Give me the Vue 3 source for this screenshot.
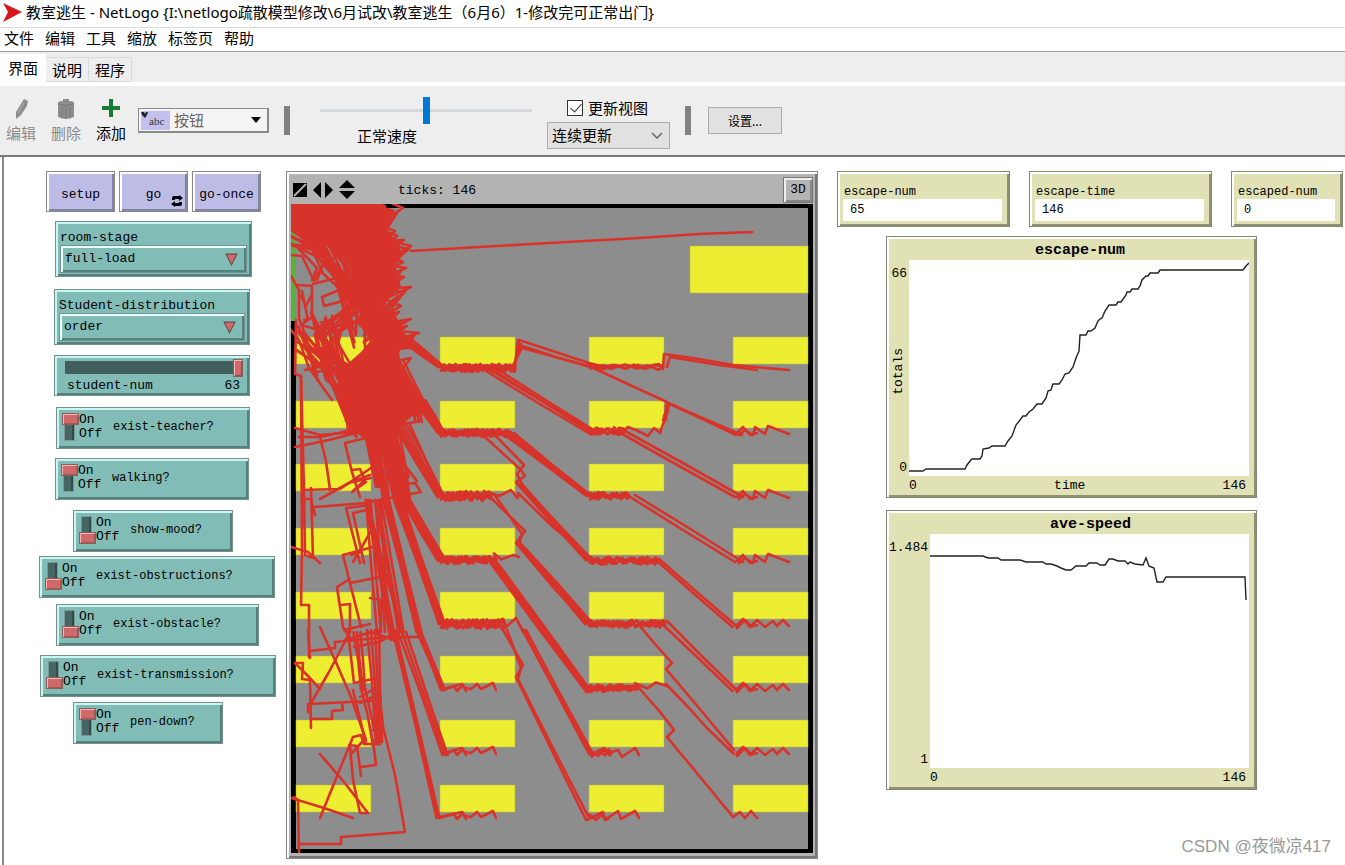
<script setup>
import { ref } from 'vue'

const menus = ['文件', '编辑', '工具', '缩放', '标签页', '帮助']
const tabs = ['界面', '说明', '程序']
const activeTab = ref('界面')

const choosers = [
  { id: 'room-stage', value: 'full-load', left: 16, gap: 9, width: 197 },
  { id: 'Student-distribution', value: 'order', left: 15, gap: 12, width: 196 },
]
const switches = ref([
  { id: 'exist-teacher?', on: true, left: 17, gap: 11, width: 194 },
  { id: 'walking?', on: true, left: 16, gap: 9, width: 194 },
  { id: 'show-mood?', on: false, left: 34, gap: 10, width: 160 },
  { id: 'exist-obstructions?', on: false, left: 0, gap: 4, width: 236 },
  { id: 'exist-obstacle?', on: false, left: 17, gap: 6, width: 203 },
  { id: 'exist-transmission?', on: false, left: 1, gap: 9, width: 236 },
  { id: 'pen-down?', on: true, left: 34, gap: 5, width: 150 },
])
const box = (w) => ({ marginLeft: w.left + 'px', marginTop: w.gap + 'px', width: w.width + 'px' })

const monitors = [
  { id: 'escape-num', value: '65' },
  { id: 'escape-time', value: '146' },
  { id: 'escaped-num', value: '0' },
]

const deskX = [297, 441, 590, 734]
const deskY = [337, 401, 464, 528, 592, 656, 720, 785]
const desks = deskY.flatMap((y) => deskX.map((x) => ({ x, y })))

let seed = 11
const rnd = () => {
  seed = (seed * 16807) % 2147483647
  return seed / 2147483647
}
const between = (a, b) => Math.round((a + rnd() * (b - a)) * 10) / 10

const trails = []
const add = (...pts) => trails.push(pts.map((p) => p.join(',')).join(' '))

// walking along a desk row
const zig = (x1, x2, y, amp, count, step = 6) => {
  for (let k = 0; k < count; k++) {
    const pts = []
    let up = k % 2 === 0
    for (let x = x1 + k; x < x2; x += between(step * 0.6, step * 1.3)) {
      pts.push([Math.round(x * 10) / 10, y + (up ? -amp : amp) * between(0.4, 1)])
      up = !up
    }
    pts.push([x2, y])
    add(...pts)
  }
}
// several walkers side by side between two places
const bundle = (x1, y1, x2, y2, n, spreadA, spreadB) => {
  for (let k = 0; k < n; k++) {
    const t = n === 1 ? 0 : k / (n - 1) - 0.5
    const mx = (x1 + x2) / 2 + t * (spreadA + spreadB) * 0.5 + between(-1, 1)
    add([x1 + t * spreadA, y1], [mx, (y1 + y2) / 2], [x2 + t * spreadB, y2])
  }
}

// second desk column
zig(441, 516, 368, 4, 6)
zig(441, 512, 433, 4, 6)
zig(441, 492, 496, 5, 5)
zig(488, 520, 494, 4, 1, 10)
zig(441, 497, 560, 4, 6)
zig(495, 520, 557, 4, 1, 10)
zig(441, 506, 624, 5, 5)
add([506, 628], [517, 618], [524, 632])
;[[444, 688], [446, 752], [440, 816]].forEach(([x, y]) => {
  add([x, y + 2], [455, y - 2], [458, y + 3], [464, y - 3], [467, y + 3])
  add([x, y + 1], [463, y - 4], [466, y], [472, y + 1], [478, y - 4], [482, y + 1], [494, y - 5], [497, y + 2])
})
// third desk column
zig(590, 664, 367, 3, 3, 12)
zig(590, 625, 431, 4, 4)
add([615, 427], [620, 435], [629, 427], [639, 431], [649, 436], [655, 428], [661, 433], [669, 410])
zig(590, 630, 496, 4, 4)
zig(590, 658, 561, 4, 4)
zig(590, 666, 624, 4, 4)
zig(590, 640, 688, 4, 4)
zig(636, 668, 686, 4, 1, 10)
zig(592, 612, 753, 4, 2)
add([592, 755], [605, 748], [610, 753], [619, 750], [623, 757], [636, 748], [640, 755])
add([588, 820], [604, 812], [606, 820], [619, 811], [622, 819], [636, 811], [640, 818])
zig(590, 610, 817, 3, 1)
// fourth desk column
;[434, 498, 562, 626, 690, 754].forEach((y, i) => {
  add([738, y - 1], [744, y - 7], [751, y + 1], [758, y - 1])
  if (i < 3) add([740, y + 1], [746, y - 4], [754, y + 1], [756, y - 7], [766, y], [769, y - 8], [790, y])
  else add([738, y + 2], [746, y - 6], [752, y], [758, y - 6], [766, y + 1], [774, y - 5], [778, y], [784, y - 6], [790, y])
})
add([734, 817], [741, 812], [746, 818], [752, 811], [758, 818])

// first row across the room
add([515, 372], [520, 340], [590, 363], [602, 366])
add([512, 369], [523, 348], [590, 366])
add([516, 366], [519, 340], [517, 358], [522, 344])
add([520, 345], [560, 358], [595, 368])
add([664, 369], [665, 354], [700, 359], [734, 365], [790, 370])
add([668, 367], [671, 357], [720, 365], [758, 370])
bundle(590, 366, 668, 402, 1, 0, 0)
bundle(669, 403, 740, 435, 2, 0, 6)
for (let k = 0; k < 4; k++) add([665 + k, 416 - k], [670 - k, 405], [664 + k, 420])

bundle(491, 371, 595, 434, 2, 8, 8)
bundle(497, 371, 598, 434, 2, 8, 6)
bundle(509, 433, 590, 496, 4, 12, 5)
add([485, 436], [522, 470], [526, 476], [517, 482], [554, 523], [590, 561])
add([494, 433], [525, 465], [518, 474], [523, 484], [560, 526], [594, 561])
bundle(520, 484, 590, 560, 4, 3, 6)
add([491, 497], [526, 531], [517, 543], [554, 587], [590, 625])
add([495, 494], [523, 534], [520, 545], [590, 621])
add([519, 493], [554, 527], [592, 558])
bundle(520, 544, 590, 624, 4, 4, 8)
bundle(495, 563, 590, 692, 4, 7, 5)
add([504, 630], [524, 665], [517, 677], [554, 753], [587, 820])
add([508, 630], [522, 668], [519, 679], [556, 752], [590, 818])
bundle(526, 630, 592, 754, 2, 2, 4)
add([517, 618], [545, 670], [593, 754])

bundle(622, 431, 740, 497, 2, 8, 8)
bundle(632, 495, 740, 562, 2, 8, 8)
bundle(658, 559, 736, 627, 2, 4, 5)
bundle(664, 621, 736, 691, 2, 8, 5)
add([640, 625], [656, 644], [673, 663], [667, 669], [700, 708], [735, 750])
add([667, 684], [690, 708], [707, 727], [735, 754])
add([640, 688], [662, 713], [675, 730], [668, 737], [702, 778], [734, 817])

// trunks that run from the crowd to each row
bundle(405, 338, 442, 367, 6, 12, 6)
bundle(420, 400, 443, 434, 6, 12, 6)
bundle(403, 425, 442, 497, 6, 16, 7)
bundle(393, 430, 407, 500, 6, 14, 8)
bundle(407, 500, 443, 561, 6, 8, 8)
bundle(384, 430, 399, 500, 5, 10, 8)
bundle(399, 500, 443, 624, 6, 8, 6)
bundle(378, 430, 387, 500, 4, 8, 6)
bundle(387, 500, 420, 632, 4, 6, 5)
bundle(420, 632, 444, 690, 3, 4, 4)
bundle(379, 500, 402, 632, 3, 6, 5)
bundle(403, 632, 446, 755, 3, 8, 5)
bundle(368, 500, 393, 632, 3, 3, 4)
bundle(395, 630, 439, 818, 3, 3, 3)
bundle(374, 500, 384, 632, 4, 14, 12)
add([376, 530], [388, 580], [404, 632])
add([378, 540], [384, 600], [392, 640])
add([412, 251], [480, 247], [550, 243], [640, 238], [700, 234], [753, 232])

// the crowd near the door
const spikes = [
  [378, 205], [386, 206], [404, 208], [396, 231], [398, 236], [405, 240], [412, 246], [410, 249], [404, 262],
  [407, 268], [405, 277], [412, 287], [404, 293], [402, 306], [400, 312], [412, 319], [408, 326], [420, 333], [414, 338],
]
spikes.forEach(([x, y]) => {
  add([370, y + between(12, 34)], [x, y], [372, y + between(-14, 8)])
  add([365, y + between(20, 60)], [x - 5, y + 3])
})
for (let k = 0; k < 20; k++) {
  const x = between(300, 340)
  add([x, between(220, 236)], [x + between(18, 28), between(252, 280)], [between(352, 374), between(300, 350)])
}
for (let k = 0; k < 14; k++) {
  add([292, between(222, 246)], [between(312, 330), between(238, 258)], [between(346, 362), between(275, 310)])
}
for (let k = 0; k < 26; k++) {
  add([between(300, 340), between(312, 350)], [between(326, 352), between(362, 382)], [between(346, 375), between(412, 440)])
}
for (let k = 0; k < 12; k++) {
  add([between(316, 340), between(322, 345)], [between(345, 362), between(302, 328)])
}
for (let k = 0; k < 9; k++) {
  add([between(297, 310), between(328, 352)], [between(318, 334), between(345, 372)])
}
for (let k = 0; k < 16; k++) {
  add([between(372, 402), between(340, 380)], [between(402, 418), between(388, 402)], [between(412, 428), between(405, 418)])
}
for (let k = 0; k < 9; k++) {
  add([between(372, 395), between(415, 430)], [between(392, 421), between(476, 490)])
}
bundle(398, 360, 440, 432, 4, 12, 4)
bundle(410, 385, 420, 422, 3, 10, 6)
add([318, 280], [325, 262], [335, 258]); add([314, 284], [341, 277], [344, 301], [325, 306], [323, 297], [350, 286])
add([292, 255], [303, 256], [315, 281], [330, 252]); add([299, 248], [318, 268], [313, 280])
add([292, 276], [300, 290], [300, 318], [306, 335], [318, 375])
add([299, 285], [313, 286], [313, 318], [305, 320]); add([302, 296], [307, 306], [312, 296])
add([303, 291], [309, 320], [302, 325], [320, 330]); add([292, 330], [300, 340], [310, 368], [333, 400])
add([299, 326], [319, 380]); add([297, 320], [296, 374], [302, 376], [305, 490])
add([306, 370], [336, 363]); add([326, 326], [340, 335], [330, 345])
add([309, 368], [318, 372], [345, 366]); add([402, 360], [412, 358], [400, 373])

// wanderers on the left side
add([305, 490], [306, 555], [314, 558], [312, 488]); add([302, 376], [303, 547], [302, 605], [310, 605], [310, 657])
add([296, 428], [321, 435], [357, 432]); add([300, 437], [321, 437], [367, 427])
add([296, 447], [330, 440], [361, 432], [421, 421]); add([321, 437], [327, 461], [331, 490])
add([304, 490], [341, 489], [372, 468]); add([321, 499], [350, 483], [371, 475]); add([304, 499], [312, 499], [316, 515])
add([367, 438], [346, 443], [353, 472], [361, 497]); add([353, 470], [361, 469], [366, 480], [353, 492], [367, 482])
add([316, 507], [367, 503], [395, 497], [422, 492], [416, 483], [400, 485])
add([372, 505], [347, 508], [361, 563]); add([354, 513], [365, 563]); add([354, 513], [372, 509])
add([354, 562], [375, 526]); add([292, 547], [309, 552], [321, 563]); add([354, 482], [372, 478])
add([374, 547], [344, 555], [351, 583], [391, 575], [388, 560]); add([352, 555], [362, 552])
add([349, 580], [338, 587], [344, 627], [352, 640]); add([342, 605], [351, 604], [351, 632])
add([351, 583], [362, 627]); add([371, 598], [382, 600], [382, 632]); add([345, 630], [371, 624])
add([311, 651], [336, 648], [336, 642], [390, 637], [424, 637]); add([309, 630], [311, 658])
add([321, 627], [336, 660], [352, 697], [367, 740]); add([351, 632], [330, 672], [312, 703])
add([296, 663], [308, 675], [321, 689]); add([296, 663], [304, 663], [303, 679], [311, 680], [312, 728])
add([309, 712], [309, 704], [372, 701]); add([312, 719], [333, 719], [333, 711], [344, 710], [343, 703])
add([349, 632], [355, 683], [379, 678]); add([354, 690], [367, 744]); add([346, 640], [372, 632], [395, 640])
bundle(358, 632, 364, 690, 3, 7, 4)
bundle(374, 630, 380, 742, 4, 12, 6)
bundle(364, 688, 376, 742, 2, 4, 5)
add([361, 697], [373, 690]); add([361, 703], [374, 697]); add([374, 730], [384, 727]); add([355, 647], [380, 642], [394, 634])
add([380, 690], [384, 727], [396, 775], [406, 832], [342, 837], [342, 844], [300, 844])
add([381, 744], [365, 744], [362, 735], [354, 737], [347, 754], [321, 818])
add([350, 745], [358, 746], [362, 776]); add([362, 767], [377, 765], [374, 740])
add([351, 745], [354, 780], [361, 813], [369, 813], [345, 782], [321, 754]); add([365, 740], [352, 754])
add([292, 798], [325, 808], [354, 818]); add([295, 797], [299, 800], [300, 852])

const escapeLine =
  '909,471 923,471 926,469 965,469 967,465 971,460 972,459 980,459 982,456 983,449 989,448 992,446 1005,446 1008,441 1012,436 1016,425 1020,420 1023,416 1026,416 1029,412 1033,409 1037,404 1042,404 1046,398 1048,391 1051,390 1053,384 1059,384 1062,380 1065,374 1069,373 1073,367 1076,358 1079,351 1080,335 1086,335 1088,331 1091,331 1095,328 1098,321 1100,319 1102,318 1105,311 1109,305 1116,305 1118,302 1121,302 1126,295 1127,292 1130,292 1132,289 1138,289 1140,286 1142,280 1146,276 1148,276 1150,273 1158,273 1160,270 1243,270 1246,266 1249,263'
const speedLine =
  '930,554 983,554 988,556 998,556 1001,558 1020,558 1026,560 1043,560 1046,562 1051,562 1057,564 1061,566 1066,568 1071,568 1076,564 1086,564 1089,561 1097,561 1100,563 1105,563 1109,557 1113,557 1118,559 1125,559 1128,562 1130,560 1135,562 1143,563 1146,556 1149,564 1154,566 1157,580 1163,580 1166,575 1245,575 1246,598'
</script>

<template>
  <div class="app">
    <header class="titlebar">
      <svg class="logo" viewBox="0 0 20 20" aria-hidden="true"><path d="M1 1 20 10 1 20 6 10Z" fill="#d8171c" /></svg>
      <span>教室逃生 - NetLogo {I:\netlogo疏散模型修改\6月试改\教室逃生（6月6）1-修改完可正常出门}</span>
    </header>

    <nav class="menubar">
      <button v-for="m in menus" :key="m" type="button">{{ m }}</button>
    </nav>

    <div class="tabs" role="tablist">
      <button
        v-for="t in tabs" :key="t" type="button" role="tab"
        :class="{ active: t === activeTab }" :aria-selected="t === activeTab" @click="activeTab = t"
      >{{ t }}</button>
    </div>

    <div class="toolbar">
      <div class="tools">
        <button type="button" class="tool" disabled>
          <svg viewBox="0 0 20 22"><path d="M13 1 17 3 16 8 10 17 5 21 5 14Z" fill="#8c8c8c" /><path d="M13 5 7 15" stroke="#b4b4b4" stroke-width="1" /></svg>
          <span>编辑</span>
        </button>
        <button type="button" class="tool" disabled>
          <svg viewBox="0 0 20 22"><path d="M2 5Q2 3 7 3V1H13V3Q18 3 18 5V19Q10 23 2 19Z" fill="#8c8c8c" /><path d="M2 6Q10 9 18 6M6 9V19M10 9V20M14 9V19" fill="none" stroke="#777" /></svg>
          <span>删除</span>
        </button>
        <button type="button" class="tool">
          <svg viewBox="0 0 20 22"><path d="M8 1H12V8H19V12H12V19H8V12H1V8H8Z" fill="#1b7a35" /></svg>
          <span>添加</span>
        </button>
      </div>
      <div class="widget-kind">
        <span class="abc"><svg viewBox="0 0 8 6"><path d="M0 0H3L4 2 5 0H7L6 3 4 6 1 3Z" fill="#223" /></svg>abc</span>
        <select aria-label="控件类型"><option>按钮</option></select>
        <svg class="caret" viewBox="0 0 10 6"><path d="M0 0H10L5 6Z" /></svg>
      </div>
      <i class="divider"></i>
      <div class="speed">
        <input id="speed" type="range" min="0" max="100" value="50" />
        <label for="speed">正常速度</label>
      </div>
      <div class="updates">
        <label class="check"><input type="checkbox" checked /><span>更新视图</span></label>
        <div class="mode">
          <select aria-label="更新方式"><option>连续更新</option></select>
          <svg viewBox="0 0 12 7"><path d="M1 1 6 6 11 1" fill="none" stroke="#666" stroke-width="1.5" /></svg>
        </div>
      </div>
      <i class="divider"></i>
      <button type="button" class="settings">设置...</button>
    </div>

    <main class="board">
      <section class="controls">
        <div class="run">
          <button type="button">setup</button>
          <button type="button">go
            <svg viewBox="0 0 12 12"><path d="M1 5V3Q1 1 3 1H8V0L12 3 8 6V4H4V5ZM11 7V9Q11 11 9 11H4V12L0 9 4 6V8H8V7Z" /></svg>
          </button>
          <button type="button">go-once</button>
        </div>

        <div v-for="c in choosers" :key="c.id" class="chooser" :style="box(c)">
          <label :for="c.id">{{ c.id }}</label>
          <div class="pick">
            <select :id="c.id"><option>{{ c.value }}</option></select>
            <svg viewBox="0 0 12 12"><path d="M1 1H11L6 11Z" fill="#d06a6a" stroke="#6e4a48" /></svg>
          </div>
        </div>

        <div class="slider">
          <input id="student-num" type="range" min="0" max="63" value="63" />
          <div><label for="student-num">student-num</label><output for="student-num">63</output></div>
        </div>

        <label v-for="s in switches" :key="s.id" class="switch" :style="box(s)">
          <input v-model="s.on" type="checkbox" />
          <span class="states"><span>On</span><span>Off</span></span>
          <span>{{ s.id }}</span>
        </label>
      </section>

      <section class="view">
        <div class="view-head">
          <svg viewBox="0 0 64 20" aria-hidden="true">
            <path d="M1 3H15V17H1Z" /><path d="M2 16 14 4" stroke="#b3b3b3" stroke-width="2" />
            <path d="M21 10 29 2V18ZM41 10 33 2V18ZM55 0 63 8H47ZM55 19 47 11H63Z" />
          </svg>
          <span>ticks: 146</span>
          <button type="button">3D</button>
        </div>
        <svg class="world" viewBox="292 204 522 649" role="img" aria-label="world">
          <rect x="292" y="204" width="522" height="649" />
          <rect x="297" y="208" width="512" height="641" fill="#8d8d8d" />
          <rect x="292" y="218" width="5" height="103" fill="#59b03c" />
          <g fill="#eded31" stroke="#b8b84a" stroke-width="0.5">
            <rect v-for="(d, i) in desks" :key="i" :x="d.x" :y="d.y" width="75" height="27" />
            <rect x="691" y="246" width="118" height="47" />
          </g>
          <path class="crowd" d="M292 204H376L396 210 388 230 402 247 396 264 402 287 382 305 396 314 406 334 424 348 400 350 402 370 414 392 420 410 400 428 388 440 382 460 384 488 376 488 366 440 350 426 336 390 344 368 362 352 372 340 361 326 360 290 350 264 326 238 292 226Z" />
          <polyline v-for="(t, i) in trails" :key="i" class="trail" :points="t" />
        </svg>
      </section>

      <section class="outputs">
        <dl class="monitors">
          <div v-for="m in monitors" :key="m.id" class="monitor"><dt>{{ m.id }}</dt><dd>{{ m.value }}</dd></div>
        </dl>

        <figure class="plot">
          <figcaption>escape-num</figcaption>
          <div class="y-axis"><span>66</span><span class="y-name">totals</span><span>0</span></div>
          <svg viewBox="909 260 340 216"><polyline :points="escapeLine" /></svg>
          <div class="x-axis"><span>0</span><span>time</span><span>146</span></div>
        </figure>

        <figure class="plot wide-axis">
          <figcaption>ave-speed</figcaption>
          <div class="y-axis"><span>1.484</span><span>1</span></div>
          <svg viewBox="930 532 319 234"><polyline :points="speedLine" /></svg>
          <div class="x-axis"><span>0</span><span>146</span></div>
        </figure>
      </section>
    </main>
    <div class="watermark">CSDN @夜微凉417</div>
  </div>
</template>

<style>
body { margin: 0; background: #fff; }
</style>

<style scoped>
* { box-sizing: border-box; }
.app {
  position: relative; min-height: 100vh; display: flex; flex-direction: column;
  font: 15px/20px "Noto Sans CJK SC", sans-serif; color: #000; background: #fff;
}
button, select, input { font: inherit; color: inherit; margin: 0; }
button { border: 0; padding: 0; background: none; }
select { appearance: none; border: 0; background: none; outline: 0; }

.titlebar { display: flex; align-items: center; gap: 4px; height: 28px; padding: 0 2px 4px; border-bottom: 1px solid #dcdcdc; font-family: "Noto Sans", "Noto Sans CJK SC", sans-serif; white-space: nowrap; }
.logo { width: 20px; height: 20px; }
.menubar { display: flex; align-items: flex-start; gap: 11px; height: 24px; padding: 0 4px; border-bottom: 1px solid #a0a0a0; }
.tabs { display: flex; align-items: flex-end; height: 30px; background: #eee; }
.tabs button { height: 25px; padding: 0 6px; border: 1px solid #d9d9d9; border-left: 0; }
.tabs .active { height: 28px; padding: 0 7px 0 8px; background: #fff; border-color: #fff; }

.toolbar { display: flex; align-items: center; height: 75px; padding: 0 6px; background: #eee; border-top: 4px solid #fff; border-bottom: 2px solid #77797c; }
.tools { display: flex; gap: 15px; }
.tool { display: flex; flex-direction: column; align-items: center; gap: 3px; height: 50px; padding-top: 2px; }
.tool svg { width: 20px; height: 22px; flex: none; }
.tool:disabled { color: #8a8a8a; }
.widget-kind { position: relative; display: flex; align-items: center; width: 131px; height: 25px; margin-left: 12px; padding: 2px; border: 1px solid #8a8a8a; border-right-width: 2px; border-bottom-width: 2px; background: #f4f4f4; color: #666; }
.abc { position: relative; flex: none; width: 29px; height: 19px; padding-left: 8px; background: #c3c0ee; font: 11px/20px "Liberation Serif", serif; color: #333; }
.abc svg { position: absolute; left: 0; top: 1px; width: 8px; height: 6px; }
.widget-kind select { flex: 1; padding: 0 4px; }
.caret { width: 10px; height: 6px; margin-right: 4px; }
.divider { width: 6px; height: 29px; margin: 0 15px; background: #808080; }
.speed { display: flex; flex-direction: column; width: 212px; margin-left: 15px; }
.speed label { margin-left: 37px; }
.speed input { appearance: none; width: 100%; height: 30px; background: linear-gradient(#d5d8d8, #d5d8d8) center / 100% 3px no-repeat; }
.speed input::-webkit-slider-thumb { appearance: none; width: 7px; height: 27px; background: #0078d7; }
.updates { display: flex; flex-direction: column; gap: 4px; margin-left: 15px; padding-top: 5px; }
.check { display: flex; align-items: center; gap: 5px; height: 20px; padding-left: 20px; }
.check input { appearance: none; position: relative; width: 16px; height: 16px; border: 1px solid #333; background: #fff; }
.check input:checked::after { content: ""; position: absolute; left: 5px; top: 0; width: 5px; height: 10px; border: solid #333; border-width: 0 1px 1px 0; transform: rotate(42deg); }
.mode { display: flex; align-items: center; width: 123px; height: 27px; padding: 0 6px 0 4px; border: 1px solid #adadad; background: #e1e1e1; }
.mode select { flex: 1; padding: 0; }
.mode svg { width: 12px; height: 7px; }
.settings { width: 74px; height: 27px; margin-left: 2px; border: 1px solid #adadad; background: #e1e1e1; font-size: 12px; }

.board {
  flex: 1; display: grid; align-items: start; margin-left: 2px; padding: 14px 2px 0 35px; border-left: 2px solid #888;
  grid-template-columns: 237fr 10px 532fr 19px 506fr;
  font: 13px/16px "Liberation Mono", "Noto Sans CJK SC", monospace;
}
.controls { grid-column: 1; }
.view { grid-column: 3; }
.outputs { grid-column: 5; }

.run { display: flex; gap: 4px; margin-left: 7px; }
.run button { position: relative; width: 69px; height: 41px; padding: 6px 0 0; background: #bcbce6; border: 1px solid #8a8a8a; box-shadow: inset 2px 2px #fff, inset -2px -2px #8282a2; }
.run svg { position: absolute; right: 4px; bottom: 4px; width: 12px; height: 12px; }

.chooser, .slider, .switch { background: #82bcb6; border: 1px solid #77908e; box-shadow: inset 2px 2px #c9f5f2, inset -2px -2px #55817d; }
.chooser { height: 56px; padding: 8px 4px 3px; }
.chooser label { display: block; height: 15px; }
.pick { display: flex; align-items: center; height: 28px; padding: 0 8px 0 4px; border: 1px solid #77908e; box-shadow: inset 2px 2px #e8ffff, inset -2px -2px #55817d; }
.pick select { flex: 1; padding: 0; }
.pick svg { width: 13px; height: 13px; }
.slider { width: 196px; height: 41px; margin: 10px 0 0 15px; padding: 2px 6px; }
.slider input { display: block; appearance: none; width: 100%; height: 19px; padding: 0 0 0 3px; background: linear-gradient(#415f5c, #415f5c) 4px center / 100% 13px no-repeat; }
.slider input::-webkit-slider-thumb { appearance: none; width: 10px; height: 18px; background: #d06a6a; border: 1px solid #85605f; box-shadow: inset 1px 1px #ffb0b0, inset -1px -1px #934b4b; }
.slider div { display: flex; justify-content: space-between; padding: 1px 3px 0 6px; }
.switch { display: flex; align-items: center; height: 42px; padding: 0 6px 2px; font-size: 12px; }
.switch input { appearance: none; position: relative; width: 11px; height: 28px; margin: 0 4px 0 1px; background: #456662; border: 1px solid #7b9794; box-shadow: inset -2px 0 #304b48; }
.switch input::before { content: ""; position: absolute; left: -3px; bottom: -1px; width: 15px; height: 10px; background: #d06a6a; border: 1px solid #85605f; box-shadow: inset 1px 1px #ffb0b0, inset -1px -1px #a85555; }
.switch input:checked::before { top: -1px; bottom: auto; }
.states { display: flex; flex-direction: column; width: 34px; font-size: 13px; line-height: 14px; }

.view { background: #b3b3b3; border: 1px solid #8a8a8a; box-shadow: inset 2px 2px #fff, inset -2px -2px #777; padding: 3px 4px 5px; }
.view-head { display: flex; align-items: center; height: 29px; padding: 0 0 0 1px; }
.view-head > svg { width: 64px; height: 20px; }
.view-head span { flex: 1; margin-left: 42px; padding-top: 2px; }
.view-head button { width: 30px; height: 26px; border: 1px solid #777; box-shadow: inset 2px 2px #eee, inset -2px -2px #888; }
.world { display: block; width: 100%; }
.trail { fill: none; stroke: #d8332a; stroke-width: 2.6; stroke-linejoin: round; stroke-linecap: round; }
.crowd { fill: #d8332a; }

.monitors { display: grid; grid-template-columns: 173fr 183fr 112fr; gap: 19px; margin: 0; }
.monitor, .plot { background: #e0e1b5; border: 1px solid #858776; box-shadow: inset 2px 2px #fff, inset -2px -2px #90916f; }
.monitor { height: 56px; padding: 12px 7px 6px 5px; }
.monitor dt { height: 15px; font-size: 12px; padding-left: 1px; white-space: nowrap; }
.monitor dd { height: 22px; margin: 0; padding: 3px 7px; background: #fff; font-size: 12px; }
.plot { display: grid; grid-template-columns: 22px 1fr; margin: 9px 86px 0 49px; padding: 4px 7px 4px 0; }
.plot.wide-axis { grid-template-columns: 43px 1fr; margin-top: 12px; }
.plot figcaption { grid-column: 1 / -1; height: 19px; padding-left: 24px; text-align: center; font-size: 15px; font-weight: bold; line-height: 20px; }
.plot.wide-axis figcaption { padding-left: 45px; }
.y-axis { display: flex; flex-direction: column; justify-content: space-between; align-items: flex-end; padding: 6px 2px 0; }
.y-name { writing-mode: vertical-rl; transform: rotate(180deg); }
.plot svg { display: block; width: 100%; background: #fff; }
.plot polyline { fill: none; stroke: #222; stroke-width: 1.4; }
.x-axis { grid-column: 2; display: flex; justify-content: space-between; padding: 2px 3px 0 0; height: 17px; }
.watermark { position: absolute; right: 14px; bottom: 7px; font: 17px/22px "Liberation Sans", "Noto Sans CJK SC", sans-serif; color: #999; }
</style>
